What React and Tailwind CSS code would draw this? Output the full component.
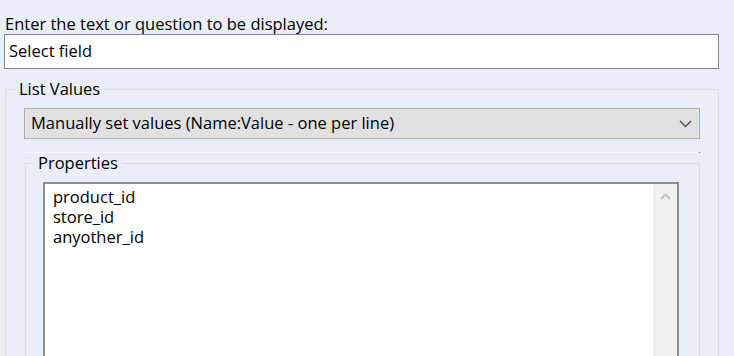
import React from 'react';

const font = { fontFamily: '"Open Sans", "Noto Sans", sans-serif' };

const ChevronDown = () => (
  <svg width="13" height="8" viewBox="0 0 13 8" fill="none">
    <path d="M1 1 L6.5 6.5 L12 1" stroke="#4a4a4a" strokeWidth="1.4" />
  </svg>
);

const ChevronUp = () => (
  <svg width="11" height="7" viewBox="0 0 11 7" fill="none">
    <path d="M1 6 L5.5 1.5 L10 6" stroke="#c2c2c2" strokeWidth="2" />
  </svg>
);

const PropertiesBox = ({ lines }) => (
  <div className="flex h-[220px] border-2 border-[#8d8d8d] bg-white">
    <div className="flex-1 pl-[8px] pt-[3px] text-[16.5px] leading-[20px] text-black">
      {lines.map((line) => (
        <div key={line}>{line}</div>
      ))}
    </div>
    <div className="flex w-[24px] justify-center bg-[#f0f0f0] pt-[9px]">
      <div className="h-[8px]">
        <ChevronUp />
      </div>
    </div>
  </div>
);

export default function App() {
  const values = ['product_id', 'store_id', 'anyother_id'];

  return (
    <div
      className="h-[356px] w-[734px] overflow-hidden bg-[#e9eef9] pl-[5px] pr-[15px] pt-[14px] text-black"
      style={font}
    >
      <div className="text-[16.5px] leading-[20px]">Enter the text or question to be displayed:</div>
      <div className="ml-[-1px] flex h-[35px] items-center border border-[#868686] bg-white pl-[4px] text-[16.5px]">
        Select field
      </div>

      <fieldset className="mt-[10px] h-[400px] border border-[#dadcdf] px-[18px] pt-[9px]">
        <legend className="ml-[-9px] px-[4px] text-[16.5px] leading-[20px]">List Values</legend>

        <div className="flex h-[31px] items-center justify-between border border-[#adadad] bg-[#e1e1e1] pl-[6px] pr-[7px] text-[16.5px]">
          <span>Manually set values (Name:Value - one per line)</span>
          <ChevronDown />
        </div>

        <div className="mt-[13px] flex items-center">
          <div className="h-px flex-1 bg-[#f7f9fe]" />
          <div className="h-px w-px bg-[#5b7fd6]" />
        </div>

        <fieldset className="ml-[1px] h-[300px] border border-[#dadcdf] pl-[17px] pr-[20px] pt-[9px]">
          <legend className="ml-[-9px] px-[4px] text-[16.5px] leading-[20px]">Properties</legend>
          <PropertiesBox lines={values} />
        </fieldset>
      </fieldset>
    </div>
  );
}
